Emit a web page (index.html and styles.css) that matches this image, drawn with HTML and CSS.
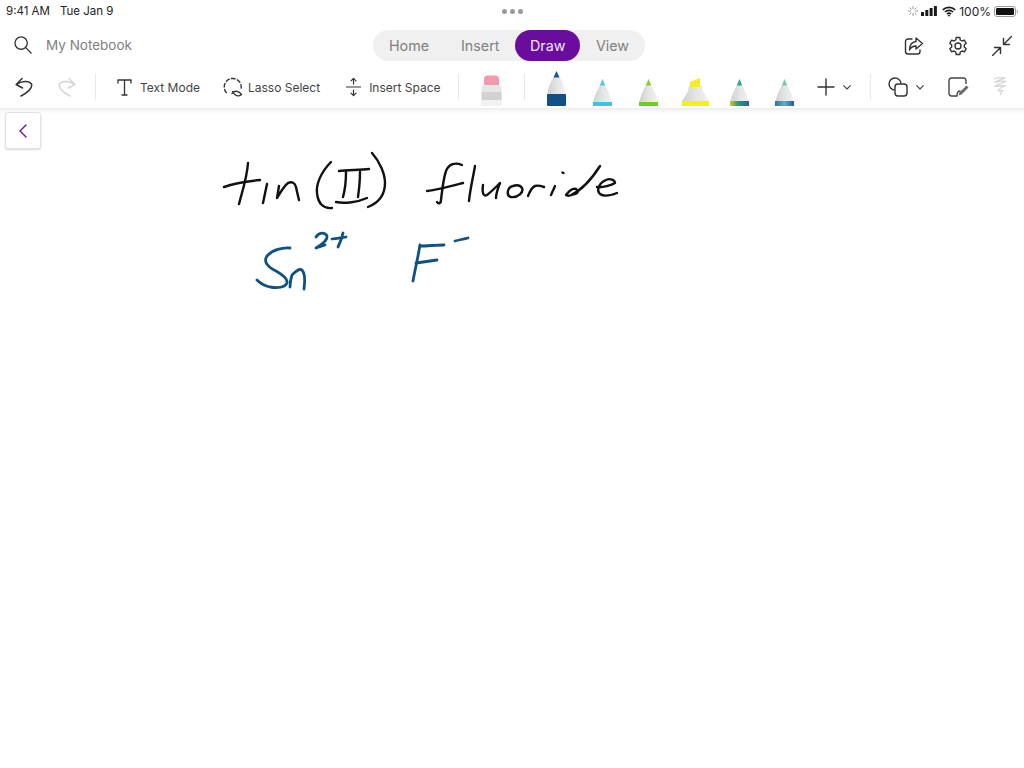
FILE: index.html
```html
<!DOCTYPE html>
<html lang="en">
<head>
    <meta charset="UTF-8">
    <title>My Notebook</title>
    <link rel="stylesheet" href="styles.css">
</head>
<body>
    <div class="app">
        <div class="status">
            <div class="status-left">
                <span>9:41 AM</span>
                <span>Tue Jan 9</span>
            </div>
            <div class="dots"><i></i><i></i><i></i></div>
            <div class="status-right">
                <svg width="10" height="10" viewBox="0 0 10 10" stroke="#999" stroke-width="1"><path d="M5 0v3M5 7v3M0 5h3M7 5h3M1.500 1.500l2 2M6.500 6.500l2 2M8.500 1.500l-2 2M3.500 6.500l-2 2"/></svg>
                <svg width="16" height="10" viewBox="0 0 16 10" fill="#1a1a1a"><rect x="0" y="6" width="3" height="4" rx=".5"/><rect x="4.300" y="4" width="3" height="6" rx=".5"/><rect x="8.600" y="2" width="3" height="8" rx=".5"/><rect x="12.900" y="0" width="3" height="10" rx=".5"/></svg>
                <svg class="wifi" width="14" height="11" viewBox="0 0 14 11" fill="none" stroke="#1a1a1a" stroke-width="1.700"><path d="M.8 3.800a9 9 0 0 1 12.400 0M2.900 6a6 6 0 0 1 8.200 0M5 8.100a3 3 0 0 1 4 0"/><path d="M7 10.800 5.800 9.400a1.800 1.800 0 0 1 2.400 0z" fill="#1a1a1a" stroke="none"/></svg>
                <span>100%</span>
                <svg width="24" height="11" viewBox="0 0 24 11"><rect x=".5" y=".5" width="21" height="10" rx="2.500" fill="none" stroke="#999"/><rect x="2" y="2" width="18" height="7" rx="1.200" fill="#111"/><path d="M22.800 3.800c.8.300 1.200 1 1.200 1.700s-.4 1.400-1.200 1.700z" fill="#999"/></svg>
            </div>
        </div>

        <div class="titlebar">
            <div class="search">
                <svg width="18" height="18" viewBox="0 0 19 19" fill="none" stroke="#333" stroke-width="1.400" stroke-linecap="round"><circle cx="7.500" cy="7.500" r="6.500"/><path d="M12.300 12.300 18 18"/></svg>
                <span>My Notebook</span>
            </div>
            <div class="tabs">
                <span class="tab">Home</span>
                <span class="tab">Insert</span>
                <span class="tab active">Draw</span>
                <span class="tab">View</span>
            </div>
            <div class="title-actions">
                <svg width="20" height="20" viewBox="0 0 20 20" fill="none" stroke="#333" stroke-width="1.400" stroke-linecap="round" stroke-linejoin="round"><path d="M8 3H4a2.500 2.500 0 0 0-2.500 2.500v10A2.500 2.500 0 0 0 4 18h9.500a2.500 2.500 0 0 0 2.500-2.500V14"/><path d="M12 2l6.500 5.500L12 13v-3c-3 0-5 1-6.500 4 0-5 2.500-8 6.500-8.500z"/></svg>
                <svg width="20" height="20" viewBox="0 0 20 20" fill="none" stroke="#333" stroke-width="1.400" stroke-linejoin="round"><path d="M8.200 1.500h3.600l.5 2.500 1.700 1 2.400-.8 1.800 3.100-1.900 1.700v2l1.900 1.700-1.800 3.100-2.400-.8-1.700 1-.5 2.500H8.200l-.5-2.500-1.700-1-2.400.8-1.800-3.100L3.700 11V9L1.800 7.300l1.800-3.100 2.400.8 1.700-1z"/><circle cx="10" cy="10" r="3"/></svg>
                <svg width="20" height="20" viewBox="0 0 20 20" fill="none" stroke="#333" stroke-width="1.400" stroke-linecap="round" stroke-linejoin="round"><path d="M19.500.5 11.500 8.500M11.500 2.500v6h6M.5 19.500l8-8M2.500 11.500h6v6"/></svg>
            </div>
        </div>

        <div class="toolbar">
            <svg class="tb-icon" width="18" height="20" viewBox="0 0 18 20" fill="none" stroke="#333" stroke-width="1.500" stroke-linecap="round" stroke-linejoin="round"><path d="M7 1.500 1.200 7.500 7.500 11M1.500 7.500C6 4 14 3 16.500 7 18 11 12 16 6 19"/></svg>
            <svg class="tb-icon redo" width="18" height="20" viewBox="0 0 18 20" fill="none" stroke="#d5d5d5" stroke-width="1.500" stroke-linecap="round" stroke-linejoin="round"><path d="M11 1.500 16.800 7.500 10.500 11M16.500 7.500C12 4 4 3 1.500 7 0 11 6 16 12 19"/></svg>
            <div class="sep first"></div>
            <div class="tool text-mode">
                <svg width="15" height="17" viewBox="0 0 15 17" fill="none" stroke="#333" stroke-width="1.300" stroke-linecap="round" stroke-linejoin="round"><path d="M1 4V1h13v3M7.500 1v15M5 16h5"/></svg>
                <span>Text Mode</span>
            </div>
            <div class="tool lasso">
                <svg width="20" height="20" viewBox="0 0 20 20" fill="none" stroke="#333" stroke-width="1.400" stroke-linecap="round"><path d="M3.300 15.500A8.500 8.500 0 1 1 18 12" stroke-dasharray="3.500 2.500"/><path d="M9 16.500c3-3.500 7-2.500 9.500 1-3 2.500-6.500 1.500-9-3"/></svg>
                <span>Lasso Select</span>
            </div>
            <div class="tool insert-space">
                <svg width="15" height="20" viewBox="0 0 15 20" fill="none" stroke="#333" stroke-width="1.200" stroke-linecap="round" stroke-linejoin="round"><path d="M.5 10h14M7.500 1.500v5.500M5 3.800l2.500-2.500L10 3.800M7.500 18.500V13M5 16.200l2.500 2.500 2.500-2.500"/></svg>
                <span>Insert Space</span>
            </div>
            <div class="sep tool-sep"></div>
            <svg class="pen eraser" width="21" height="31" viewBox="0 0 21 31"><path d="M3 4a3.500 3.500 0 0 1 3.500-3.500h8A3.500 3.500 0 0 1 18 4v8H3z" fill="#f09ab0"/><path d="M.5 13a3 3 0 0 1 3-3h14a3 3 0 0 1 3 3v18H.5z" fill="#e6e6e6"/><rect x=".5" y="17" width="20" height="8" fill="#d2d2d2"/><rect x=".5" y="25" width="20" height="6" fill="#f2f2f2"/></svg>
            <div class="sep eraser-sep"></div>
            <svg class="pen pen-blue" width="21" height="35" viewBox="0 0 21 35"><defs><linearGradient id="body"><stop offset="0" stop-color="#d0d0d0"/><stop offset=".55" stop-color="#e6e6e6"/><stop offset="1" stop-color="#f1f1f1"/></linearGradient></defs><path d="M10.500 0 13.500 6C16.500 11 19 17 20 24V35H1V24C2 17 4.500 11 7.500 6z" fill="url(#body)"/><path d="M10.500 0 13.500 6.500H7.500z" fill="#155a8a"/><rect x="1" y="23" width="19" height="12" rx="1" fill="#0f5184"/></svg>
            <svg class="pen pen-aqua" width="21" height="27" viewBox="0 0 21 27"><path d="M10.500 0 13 6C16 11 18.500 17 20 24V27H1V24C2.500 17 5 11 8 6z" fill="url(#body)"/><path d="M10.500 0 13.200 6.500H7.800z" fill="#4dcbe8"/><rect x="1" y="23" width="19" height="4" fill="#3fc2e6"/></svg>
            <svg class="pen pen-green" width="21" height="27" viewBox="0 0 21 27"><path d="M10.500 0 13 6C16 11 18.500 17 20 24V27H1V24C2.500 17 5 11 8 6z" fill="url(#body)"/><path d="M10.500 0 13.200 6.500H7.800z" fill="#7ed321"/><rect x="1" y="23" width="19" height="4" fill="#6fce1c"/></svg>
            <svg class="pen pen-yellow" width="27" height="28" viewBox="0 0 27 28"><path d="M7 8h13l1 5C22 16 25 19 27 23V28H0V23C2 19 5 16 6 13z" fill="url(#body)"/><path d="M8 4l10-4v9H8z" fill="#f4ee1a"/><rect x="0" y="23" width="27" height="5" rx="1" fill="#f4f01c"/></svg>
            <svg class="pen pen-teal" width="21" height="27" viewBox="0 0 21 27"><defs><linearGradient id="mixa"><stop offset="0" stop-color="#e0c52c"/><stop offset=".4" stop-color="#2f9c6e"/><stop offset="1" stop-color="#2f5aa6"/></linearGradient></defs><path d="M10.500 0 13 6C16 11 18.500 17 20 24V27H1V24C2.500 17 5 11 8 6z" fill="url(#body)"/><path d="M10.500 0 13.200 6.500H7.800z" fill="#2aa68a"/><rect x="1" y="22" width="19" height="5" fill="url(#mixa)"/></svg>
            <svg class="pen pen-mix" width="21" height="27" viewBox="0 0 21 27"><defs><linearGradient id="mixb"><stop offset="0" stop-color="#2f6fa8"/><stop offset=".5" stop-color="#5fb0c4"/><stop offset="1" stop-color="#27589c"/></linearGradient></defs><path d="M10.500 0 13 6C16 11 18.500 17 20 24V27H1V24C2.500 17 5 11 8 6z" fill="url(#body)"/><path d="M10.500 0 13.200 6.500H7.800z" fill="#6fcdb6"/><rect x="1" y="22" width="19" height="5" fill="url(#mixb)"/></svg>
            <svg class="tb-icon plus" width="18" height="18" viewBox="0 0 18 18" stroke="#333" stroke-width="1.400" stroke-linecap="round"><path d="M9 1v16M1 9h16"/></svg>
            <svg class="chev" width="8" height="5" viewBox="0 0 8 5" fill="none" stroke="#444" stroke-width="1.100" stroke-linecap="round" stroke-linejoin="round"><path d="M.7.7 4 4 7.300.7"/></svg>
            <div class="sep shapes-sep"></div>
            <svg class="tb-icon shapes" width="20" height="20" viewBox="0 0 20 20" fill="none" stroke="#333" stroke-width="1.400"><path d="M6.500 13A6 6 0 1 1 13 6.500"/><rect x="7" y="7" width="12" height="12" rx="3"/></svg>
            <svg class="chev shapes-chev" width="8" height="5" viewBox="0 0 8 5" fill="none" stroke="#444" stroke-width="1.100" stroke-linecap="round" stroke-linejoin="round"><path d="M.7.7 4 4 7.300.7"/></svg>
            <svg class="tb-icon sticky" width="21" height="20" viewBox="0 0 21 20" fill="none" stroke="#444" stroke-width="1.400" stroke-linejoin="round"><path d="M18 7V3.500A2.500 2.500 0 0 0 15.500 1h-12A2.500 2.500 0 0 0 1 3.500v13A2.500 2.500 0 0 0 3.500 19H9"/><path d="M9 19c0-3 1-5 3-5" stroke-linecap="round"/><path d="M10.500 18.500l1-3 7-7 2 2-7 7z" fill="#666" stroke="none"/></svg>
            <svg class="tb-icon ink" width="16" height="20" viewBox="0 0 16 20" fill="none" stroke="#d6d6d6" stroke-width="1.300" stroke-linecap="round" stroke-linejoin="round"><path d="M2 2c3-1 8-1.500 11-1-3 1-8 2.500-10 4.500 3-1 8-1.500 11-1-3 1-9 3-11 5 3-.5 8-1 10-.5-3 1-6 3-7 5 2-.5 4-1 5-.5-1.500.8-2.500 2-2.500 4"/></svg>
        </div>

        <div class="page">
            <button class="back">
                <svg width="8" height="14" viewBox="0 0 8 14" fill="none" stroke="#6a0f9e" stroke-width="1.400" stroke-linecap="round" stroke-linejoin="round"><path d="M7 1 1 7l6 6"/></svg>
            </button>
            <!-- handwritten ink strokes on the notebook page -->
            <svg class="ink-layer" width="1024" height="660" viewBox="0 108 1024 660" fill="none" stroke-linecap="round" stroke-linejoin="round">
                <g class="ink-black">
                    <path d="M224 187C235 183 250 181 260 180"/>
                    <path d="M248 163C247 178 242 192 239 204"/>
                    <path d="M267 184 263 203"/>
                    <path d="M279 186 277 198C280 193 284 186 288 183C292 181 295 183 296 187 297 192 298 196 299 200"/>
                    <path d="M331 162C321 172 316 184 317 193C318 204 324 209 332 208"/>
                    <path d="M339 171C348 170 360 170 369 169"/>
                    <path d="M346 172C346 181 345 190 343 197"/>
                    <path d="M360 172C360 181 359 190 358 197"/>
                    <path d="M336 202C345 204 358 202 367 198"/>
                    <path d="M372 153C380 162 385 174 385 183C385 195 378 203 368 207"/>
                    <path d="M427 191C438 190 452 186 463 183"/>
                    <path d="M462 165C455 162 449 164 446 171C443 180 442 192 441 200C441 204 438 204 437 202"/>
                    <path d="M475 166C473 178 470 190 469 201"/>
                    <path d="M483 185C482 192 483 197 487 195C491 192 496 187 500 183C498 188 496 193 496 198"/>
                    <path d="M513 186C507 187 506 196 511 197C518 198 524 192 522 188C520 185 516 185 513 186"/>
                    <path d="M528 196C530 191 532 187 535 186C538 185 541 186 544 187"/>
                    <path d="M555 186 551 195"/>
                    <path d="M562.500 172.500 563.500 173"/>
                    <path d="M566 195C569 191 573 188 576 189 579 191 578 193 575 194 570 196 567 196 566 195M571 195C582 190 593 177 600 166"/>
                    <path d="M597 187C602 188 612 185 615 183C615 180 610 178 606 180C599 183 596 190 600 194C604 197 612 195 617 193"/>
                </g>
                <g class="ink-blue">
                    <path d="M290 248C283 247 272 250 267 256C263 262 268 267 276 271C283 275 288 279 287 283C285 288 277 288 270 287C265 286 260 283 257 280"/>
                    <path d="M290 287C290 282 291 278 292 275C295 272 299 268 302 270C305 273 305 282 304 289"/>
                    <path d="M316 237C319 232 325 232 327 236C328 240 321 245 316 248C319 247 322 246 325 245"/>
                    <path d="M332 239C337 238 342 238 346 237"/>
                    <path d="M343 233C342 238 340 243 338 247"/>
                    <path d="M420 245C418 257 415 270 413 281"/>
                    <path d="M420 246C428 246 436 245 444 245"/>
                    <path d="M416 263C423 262 430 261 437 260"/>
                    <path d="M455 241C459 240 464 239 468 238"/>
                </g>
            </svg>
        </div>
    </div>
</body>
</html>
```

FILE: styles.css
```css
*{
    padding: 0;
    margin: 0;
    box-sizing: border-box;
    font-family: "Inter", "Liberation Sans", sans-serif;
}
body{
    background: #fff;
    overflow: hidden;
}
.app{
    width: 1024px;
    height: 768px;
    display: flex;
    flex-direction: column;
}
svg{
    display: block;
    flex-shrink: 0;
}

/* status bar */
.status{
    height: 22px;
    padding: 0 6px;
    display: grid;
    grid-template-columns: 1fr auto 1fr;
    align-items: center;
    font-size: 11.500px;
    color: #222;
}
.status-left{
    display: flex;
    gap: 10px;
}
.dots{
    display: flex;
    gap: 3px;
}
.dots i{
    width: 5px;
    height: 5px;
    border-radius: 50%;
    background: #999;
}
.status-right{
    display: flex;
    align-items: center;
    justify-content: flex-end;
    gap: 3px;
    font-size: 12px;
}
.wifi{
    margin-left: 2px;
}

/* title row */
.titlebar{
    height: 44px;
    padding: 2px 12px 0 14px;
    display: grid;
    grid-template-columns: 1fr auto 1fr;
    align-items: center;
}
.search{
    display: flex;
    align-items: center;
    gap: 14px;
    font-size: 13.500px;
    color: #808080;
}
.tabs{
    height: 31px;
    margin-right: 8px;
    display: flex;
    align-items: center;
    background: #f0f0f0;
    border-radius: 16px;
}
.tab{
    height: 31px;
    padding: 0 16px;
    display: flex;
    align-items: center;
    font-size: 14.300px;
    color: #808080;
    border-radius: 16px;
}
.tab.active{
    padding: 0 14.500px;
    background: #6a0c9c;
    color: #f4e8fa;
}
.title-actions{
    margin-top: 1px;
    display: flex;
    justify-content: flex-end;
    gap: 24px;
}

/* draw toolbar */
.toolbar{
    height: 42px;
    padding-left: 15px;
    display: flex;
    align-items: center;
}
.redo{
    margin-left: 25px;
}
.sep{
    width: 1px;
    height: 26px;
    background: #e8e8e8;
}
.sep.first{
    margin-left: 19px;
}
.tool{
    display: flex;
    align-items: center;
    gap: 8px;
    font-size: 12px;
    color: #444;
}
.text-mode{
    margin-left: 21px;
}
.lasso{
    margin-left: 23px;
    gap: 5px;
}
.insert-space{
    margin-left: 26px;
}
.tool-sep{
    margin-left: 17px;
}
.pen{
    align-self: flex-end;
    margin-bottom: 2px;
}
.eraser{
    margin-left: 22px;
}
.eraser-sep{
    margin-left: 22px;
}
.pen-blue{
    margin-left: 21px;
}
.pen-aqua{
    margin-left: 25px;
}
.pen-green{
    margin-left: 25px;
}
.pen-yellow{
    margin-left: 23px;
}
.pen-teal{
    margin-left: 20px;
}
.pen-mix{
    margin-left: 24px;
}
.plus{
    margin-left: 22px;
}
.chev{
    margin-left: 8px;
}
.shapes-sep{
    margin-left: 19px;
}
.shapes{
    margin-left: 17px;
}
.shapes-chev{
    margin-left: 8px;
}
.sticky{
    margin-left: 24px;
}
.ink{
    margin-left: 23px;
}

/* notebook page */
.page{
    flex: 1;
    position: relative;
    background: linear-gradient(#ececec, #f8f8f8 3px, #fff 6px);
}
.back{
    position: absolute;
    left: 5px;
    top: 4px;
    z-index: 2;
    width: 36px;
    height: 37px;
    display: flex;
    align-items: center;
    justify-content: center;
    background: #fff;
    border: 1px solid #e2e2e2;
    border-radius: 3px;
    box-shadow: 0 1px 2px rgba(0, 0, 0, 0.15);
}
.ink-layer{
    position: absolute;
    left: 0;
    top: 0;
}
.ink-black{
    stroke: #111;
    stroke-width: 2.400;
}
.ink-blue{
    stroke: #0f5184;
    stroke-width: 2.800;
}
```
